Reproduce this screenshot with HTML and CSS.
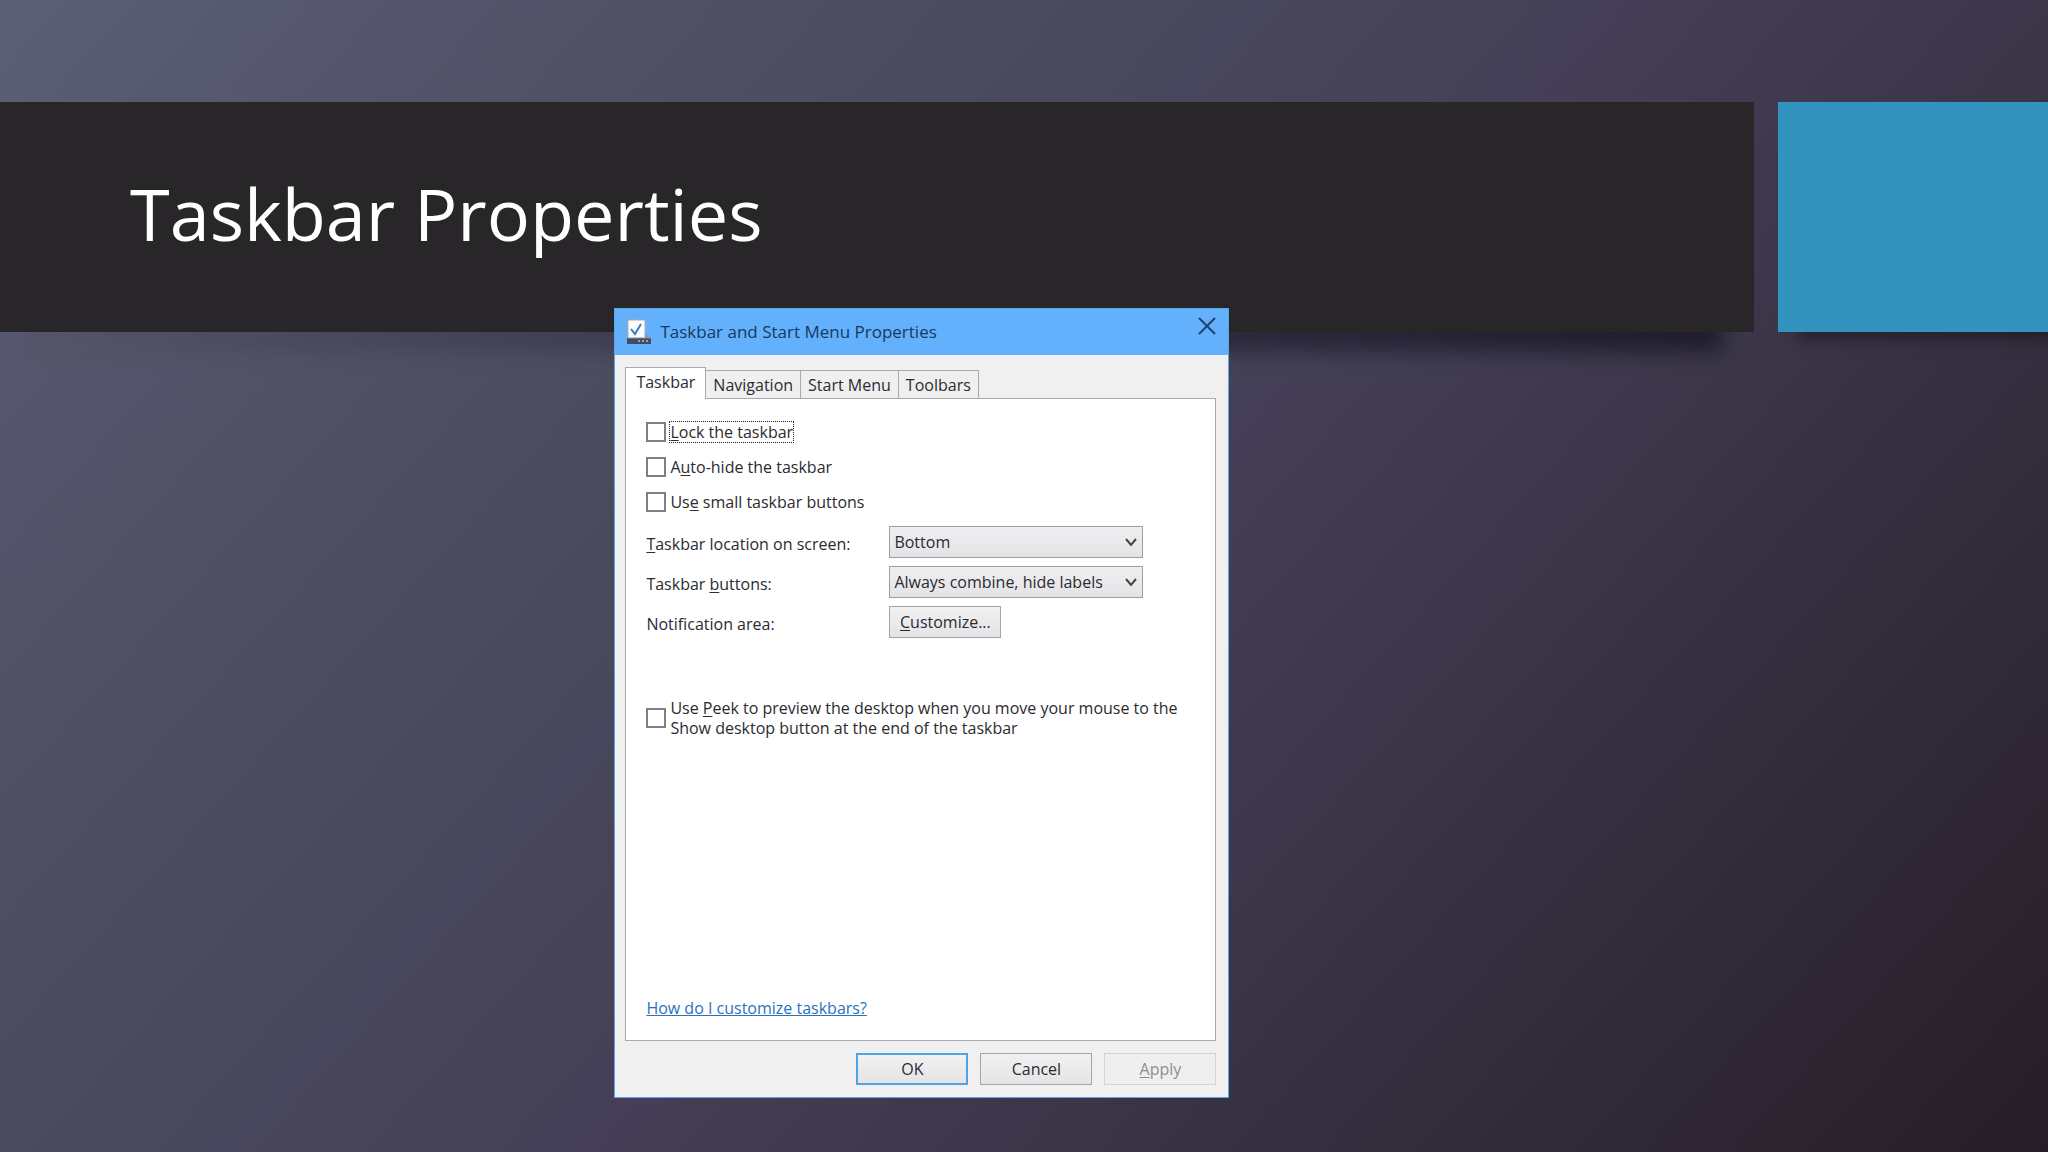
FILE: index.html
```
<!DOCTYPE html>
<html lang="en">
<head>
    <meta charset="UTF-8">
    <title>Taskbar Properties</title>
    <link rel="stylesheet" href="styles.css">
</head>

<body>

    <header class="banner">
        <div class="banner-title">
            <h1>Taskbar Properties</h1>
        </div>
        <div class="banner-accent"></div>
    </header>

    <main class="window">

        <div class="titlebar">
            <svg class="titlebar-icon" width="26" height="26" viewBox="0 0 26 26">
                <rect x="2" y="1" width="17" height="19" fill="#fdfdfd" stroke="#b9a9a0"/>
                <path d="M5 10l4 5 6-10" fill="none" stroke="#2f7fc4" stroke-width="2"/>
                <path d="M1 19h19l5-1v7H1z" fill="#3f4f63"/>
                <path d="M19 15l6 3v1h-6z" fill="#8f9aa8"/>
                <path d="M1 19h24" stroke="#8f8f98"/>
                <path d="M12 22h2M16 22h2M20 22h2" stroke="#8ea6c0" stroke-width="2"/>
            </svg>
            <h2>Taskbar and Start Menu Properties</h2>
            <button class="close" aria-label="Close">
                <svg width="18" height="18" viewBox="0 0 18 18">
                    <path d="M1 1l16 16M17 1L1 17" stroke="#1d4468" stroke-width="2"/>
                </svg>
            </button>
        </div>

        <div class="window-body">

            <div class="tabs" role="tablist">
                <button class="tab active" role="tab" aria-selected="true">Taskbar</button>
                <button class="tab" role="tab">Navigation</button>
                <button class="tab" role="tab">Start Menu</button>
                <button class="tab" role="tab">Toolbars</button>
            </div>

            <div class="panel">

                <div class="checks">
                    <label class="check"><input type="checkbox"><span class="focused"><u>L</u>ock the taskbar</span></label>
                    <label class="check"><input type="checkbox"><span>A<u>u</u>to-hide the taskbar</span></label>
                    <label class="check"><input type="checkbox"><span>Us<u>e</u> small taskbar buttons</span></label>
                </div>

                <div class="settings">
                    <label for="location"><u>T</u>askbar location on screen:</label>
                    <div class="dropdown">
                        <select id="location">
                            <option>Bottom</option>
                            <option>Left</option>
                            <option>Right</option>
                            <option>Top</option>
                        </select>
                        <svg class="chevron" width="12" height="10" viewBox="0 0 12 10">
                            <path d="M1 2l5 6 5-6" fill="none" stroke="#444" stroke-width="2"/>
                        </svg>
                    </div>

                    <label for="combine">Taskbar <u>b</u>uttons:</label>
                    <div class="dropdown">
                        <select id="combine">
                            <option>Always combine, hide labels</option>
                            <option>Combine when taskbar is full</option>
                            <option>Never combine</option>
                        </select>
                        <svg class="chevron" width="12" height="10" viewBox="0 0 12 10">
                            <path d="M1 2l5 6 5-6" fill="none" stroke="#444" stroke-width="2"/>
                        </svg>
                    </div>

                    <label for="customize">Notification area:</label>
                    <button class="btn" id="customize"><u>C</u>ustomize...</button>
                </div>

                <label class="check peek"><input type="checkbox"><span>Use <u>P</u>eek to preview the desktop when you move your mouse to the Show desktop button at the end of the taskbar</span></label>

                <a class="help" href="#">How do I customize taskbars?</a>

            </div>

            <div class="actions">
                <button class="btn default">OK</button>
                <button class="btn">Cancel</button>
                <button class="btn" disabled><u>A</u>pply</button>
            </div>

        </div>

    </main>

</body>
</html>
```
FILE: styles.css
```
* {
    box-sizing: border-box;
}

body {
    margin: 0;
    min-height: 100vh;
    padding-top: 102px;
    font-family: "Open Sans", "Noto Sans", sans-serif;
    font-size: 16px;
    line-height: 20px;
    color: #2b2b30;
    background: linear-gradient(132deg, #5b6074 0%, #55566b 12%, #4b4b60 33%, #443f56 53%, #353040 75%, #271d26 100%);
}

h1, h2 {
    margin: 0;
    font-weight: normal;
}

button, select {
    font: inherit;
    color: inherit;
}

u {
    text-underline-offset: 2px;
}

/* slide header */
.banner {
    display: flex;
    gap: 24px;
    height: 230px;
}

.banner-title {
    position: relative;
    flex: 1;
    display: flex;
    align-items: center;
    padding: 0 130px 8px;
    background: #282628;
}

/* shadow that gets stronger towards the right end of the bar */
.banner-title::after {
    content: "";
    position: absolute;
    z-index: -1;
    left: 0;
    right: 32px;
    bottom: -20px;
    height: 60px;
    background: linear-gradient(90deg, transparent, rgba(25, 22, 38, 0.8));
    filter: blur(10px);
}

.banner-title h1 {
    font-size: 72px;
    font-weight: 500;
    line-height: 100px;
    color: #ffffff;
}

.banner-accent {
    width: 270px;
    background: #3293be;
    box-shadow: 14px 14px 12px -6px rgba(30, 20, 35, 0.6);
}

/* dialog window */
.window {
    position: relative;
    width: 30vw;
    min-width: 615px;
    margin-top: -24px;
    margin-left: 30vw;
    border: 1px solid #58a9ea;
    background: #f0f0f0;
}

.titlebar {
    display: flex;
    align-items: center;
    gap: 8px;
    height: 46px;
    padding: 0 12px 0 11px;
    color: #17395c;
    background: #63b1fd;
}

.titlebar h2 {
    flex: 1;
    font-size: 17px;
}

.close {
    align-self: flex-start;
    display: flex;
    padding: 8px 0;
    border: none;
    background: none;
}

.window-body {
    padding: 12px 12px 12px 10px;
}

.tabs {
    display: flex;
    align-items: flex-end;
}

.tab {
    height: 28px;
    padding: 0 7px;
    border: 1px solid #a9a9ac;
    border-left: none;
    border-bottom: none;
    background: #efeff0;
}

.tab.active {
    position: relative;
    height: 32px;
    margin-bottom: -1px;
    padding: 0 10px 4px;
    border-left: 1px solid #a9a9ac;
    background: #ffffff;
}

.panel {
    display: flex;
    flex-direction: column;
    align-items: flex-start;
    height: 643px;
    padding: 23px 20px 22px;
    border: 1px solid #a9a9ac;
    background: #ffffff;
}

.checks {
    display: flex;
    flex-direction: column;
    gap: 15px;
}

.check {
    display: flex;
    align-items: center;
    gap: 4px;
}

.check input {
    appearance: none;
    flex: none;
    width: 20px;
    height: 20px;
    margin: 0;
    border: 2px solid #808084;
    background: #ffffff;
}

.focused {
    outline: 1px dotted #222222;
}

.settings {
    display: grid;
    grid-template-columns: 243px 254px;
    align-items: center;
    row-gap: 8px;
    margin-top: 14px;
}

.settings label {
    padding-top: 4px;
}

.dropdown {
    position: relative;
}

.dropdown select {
    appearance: none;
    width: 100%;
    height: 32px;
    padding: 0 4px;
    border: 1px solid #9d9da1;
    border-radius: 0;
    background: linear-gradient(#efeff1, #e4e4e6);
}

.chevron {
    position: absolute;
    top: 11px;
    right: 6px;
    pointer-events: none;
}

.btn {
    width: 112px;
    height: 32px;
    padding: 0;
    border: 1px solid #a4a4a7;
    background: linear-gradient(#f1f1f2, #e4e4e6);
}

.btn.default {
    border: 2px solid #4fa3e3;
}

.btn:disabled {
    color: #8d8d90;
    border-color: #d5d5d7;
    background: #efeff0;
}

.peek {
    margin-top: 60px;
}

.help {
    margin-top: auto;
    color: #2a72bd;
}

.actions {
    display: flex;
    justify-content: flex-end;
    gap: 12px;
    padding-top: 12px;
}
```
